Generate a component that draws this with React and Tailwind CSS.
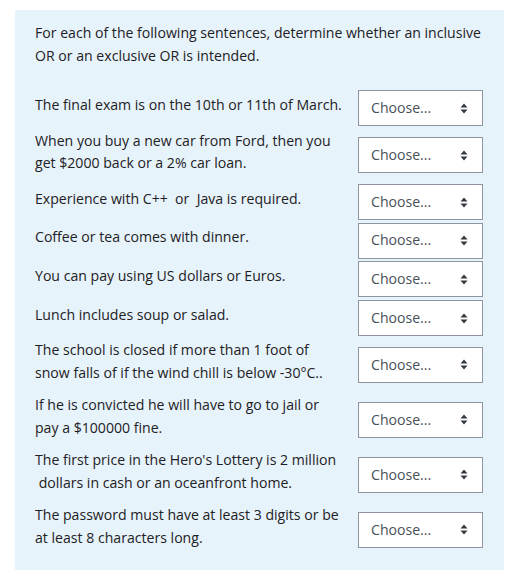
import React from "react";

const rows = [
  ["The final exam is on the 10th or 11th of March."],
  ["When you buy a new car from Ford, then you", "get $2000 back or a 2% car loan."],
  ["Experience with C++  or  Java is required."],
  ["Coffee or tea comes with dinner."],
  ["You can pay using US dollars or Euros."],
  ["Lunch includes soup or salad."],
  ["The school is closed if more than 1 foot of", "snow falls of if the wind chill is below -30°C.."],
  ["If he is convicted he will have to go to jail or", "pay a $100000 fine."],
  ["The first price in the Hero's Lottery is 2 million", "\u00a0dollars in cash or an oceanfront home."],
  ["The password must have at least 3 digits or be", "at least 8 characters long."],
];

const SelectBox = () => (
  <div className="py-[1.35px]">
    <div className="w-[125px] h-[36px] bg-white border border-[#8f959e] flex items-center justify-between pl-[12px] pr-[14px] text-[#495057]">
      <span>Choose...</span>
      <svg width="8" height="11" viewBox="0 0 8 11">
        <path d="M4 0.5 L7.5 4.5 H0.5 Z M4 10.5 L7.5 6.5 H0.5 Z" fill="#343a40" />
      </svg>
    </div>
  </div>
);

export default function App() {
  return (
    <div className="w-[520px] h-[576px] bg-white pt-[10px] pl-[15px]" style={{ fontFamily: '"Open Sans", "Noto Sans", sans-serif' }}>
      <div className="w-[489px] h-[560px] bg-[#e7f3fa] pl-[20px] pt-[12px] text-[14.1px] leading-[22.5px] text-[#1d2125]">
        <p className="w-[462px]">
          For each of the following sentences, determine whether an inclusive OR or an exclusive OR is intended.
        </p>
        <div className="mt-[22px] flex flex-col">
          {rows.map((lines, i) => (
            <div key={i} className="flex items-center">
              <div className="w-[323px] pt-[2px] pb-[8px]">
                {lines.map((l, j) => (
                  <div key={j} className="whitespace-pre">{l}</div>
                ))}
              </div>
              <SelectBox />
            </div>
          ))}
        </div>
      </div>
    </div>
  );
}
